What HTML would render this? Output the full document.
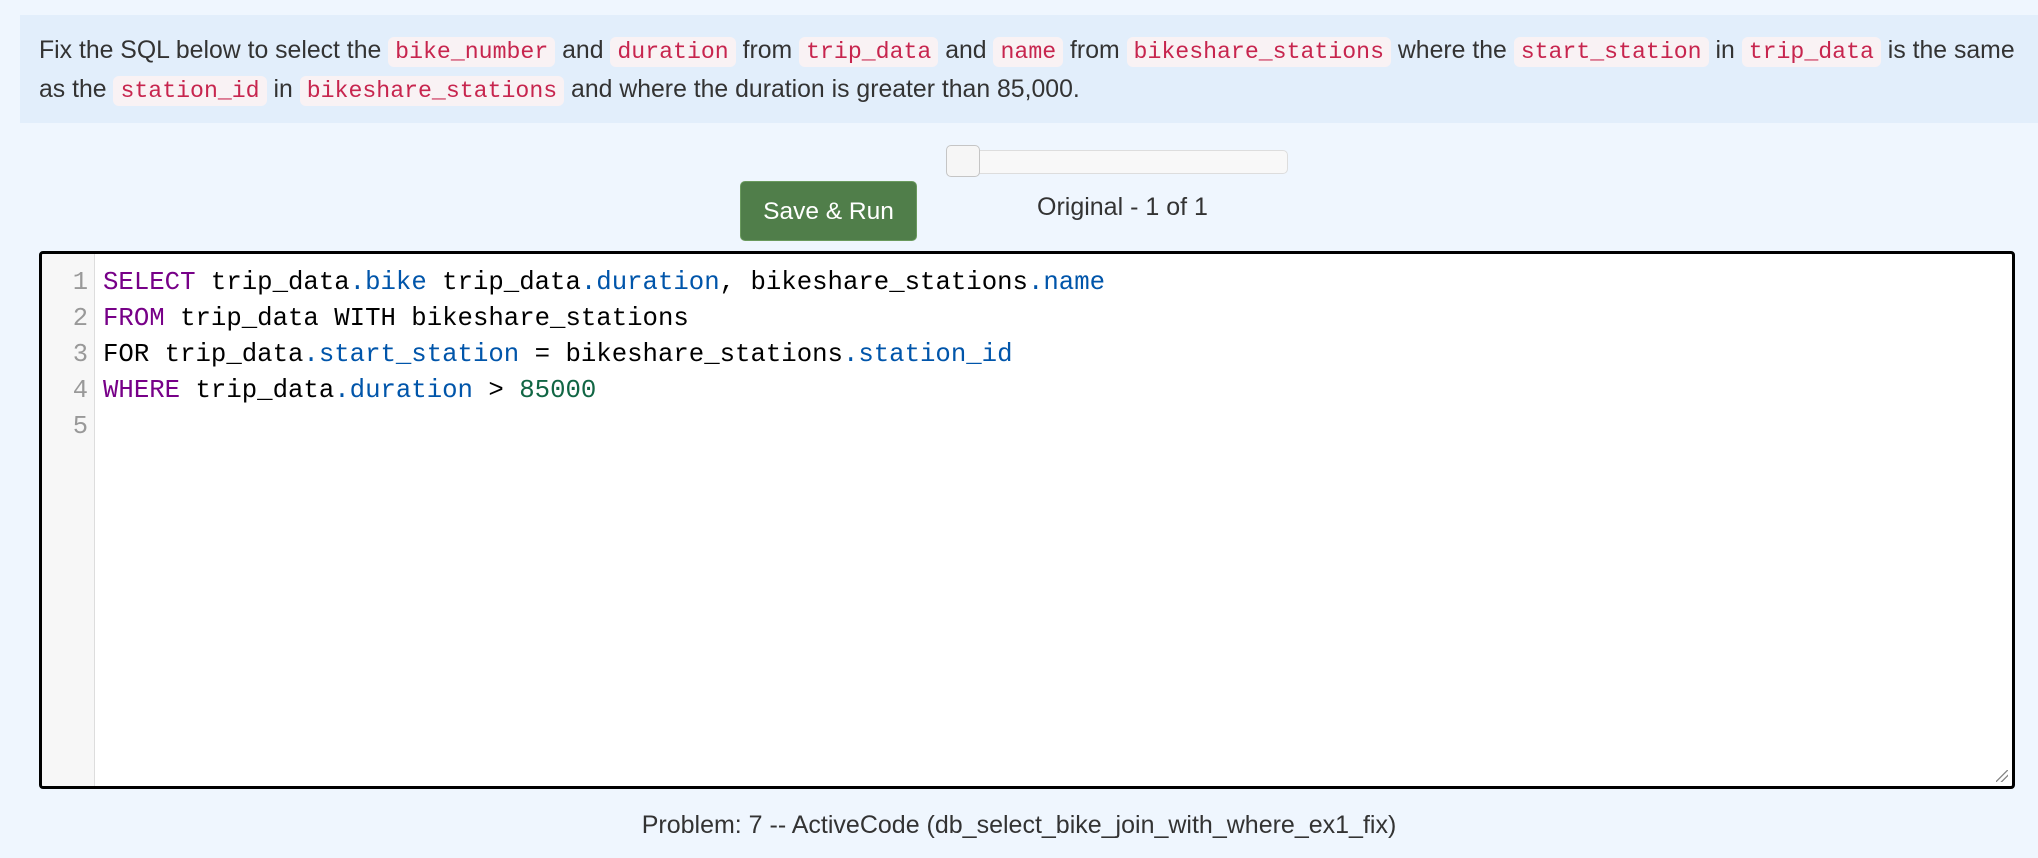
<!DOCTYPE html>
<html><head><meta charset="utf-8"><style>
body{margin:0;width:2038px;height:858px;background:#eff6fe;font-family:"Liberation Sans",sans-serif;color:#333;position:relative;overflow:hidden}
.box{position:absolute;left:20px;top:15px;width:2018px;height:108px;background:#e2eefb}
.box p{margin:0;position:absolute;left:19px;top:17px;font-size:24.8px;line-height:38px;white-space:nowrap}
code{font-family:"Liberation Mono",monospace;font-size:23.2px;color:#c7254e;background:#f9f2f4;padding:2px 7px;border-radius:6px}
.slider{position:absolute;left:946px;top:150px;width:340px;height:22px;background:#f8f8f8;border:1px solid #ddd;border-radius:5px}
.handle{position:absolute;left:946px;top:145px;width:32px;height:30px;background:#f6f6f6;border:1px solid #c5c5c5;border-radius:5px}
.btn{position:absolute;left:740px;top:181px;width:177px;height:60px;background:#507e4a;border:1px solid #6a9a5e;border-radius:5px;color:#fff;font-size:24.5px;line-height:60px;text-align:center;box-sizing:border-box}
.orig{position:absolute;left:1037px;top:193px;font-size:25px}
.ed{position:absolute;left:39px;top:251px;width:1976px;height:538px;border:3px solid #000;border-radius:4px;background:#fff;box-sizing:border-box;overflow:hidden}
.gut{position:absolute;left:0;top:0;bottom:0;width:52px;background:#f7f7f7;border-right:1px solid #ddd}
.ln{position:absolute;left:0;width:46px;text-align:right;color:#999;font-family:"Liberation Mono",monospace;font-size:25.5px}
.cl{position:absolute;left:61px;font-family:"Liberation Mono",monospace;font-size:25.7px;color:#000;white-space:pre}
.k{color:#708}.p{color:#05a}.n{color:#164}
.rs{position:absolute;right:4px;bottom:4px;width:12px;height:12px;background:linear-gradient(135deg,transparent 45%,#888 46%,#888 52%,transparent 53%,transparent 68%,#888 69%,#888 75%,transparent 76%)}
.foot{position:absolute;left:0;width:2038px;text-align:center;top:811px;font-size:25px}
</style></head><body>
<div class="box"><p>Fix the SQL below to select the <code>bike_number</code> and <code>duration</code> from <code>trip_data</code> and <code>name</code> from <code>bikeshare_stations</code> where the <code>start_station</code> in <code>trip_data</code> is the same<br>as the <code>station_id</code> in <code>bikeshare_stations</code> and where the duration is greater than 85,000.</p></div>
<div class="slider"></div><div class="handle"></div>
<div class="btn">Save &amp; Run</div>
<div class="orig">Original - 1 of 1</div>
<div class="ed"><div class="gut"></div>
<div class="ln" style="top:14px">1</div><div class="ln" style="top:50px">2</div><div class="ln" style="top:86px">3</div><div class="ln" style="top:122px">4</div><div class="ln" style="top:158px">5</div>
<div class="cl" style="top:14px"><span class="k">SELECT</span> trip_data<span class="p">.bike</span> trip_data<span class="p">.duration</span>, bikeshare_stations<span class="p">.name</span></div>
<div class="cl" style="top:50px"><span class="k">FROM</span> trip_data WITH bikeshare_stations</div>
<div class="cl" style="top:86px">FOR trip_data<span class="p">.start_station</span> = bikeshare_stations<span class="p">.station_id</span></div>
<div class="cl" style="top:122px"><span class="k">WHERE</span> trip_data<span class="p">.duration</span> &gt; <span class="n">85000</span></div>
<div class="rs"></div>
</div>
<div class="foot">Problem: 7 -- ActiveCode (db_select_bike_join_with_where_ex1_fix)</div>
</body></html>
